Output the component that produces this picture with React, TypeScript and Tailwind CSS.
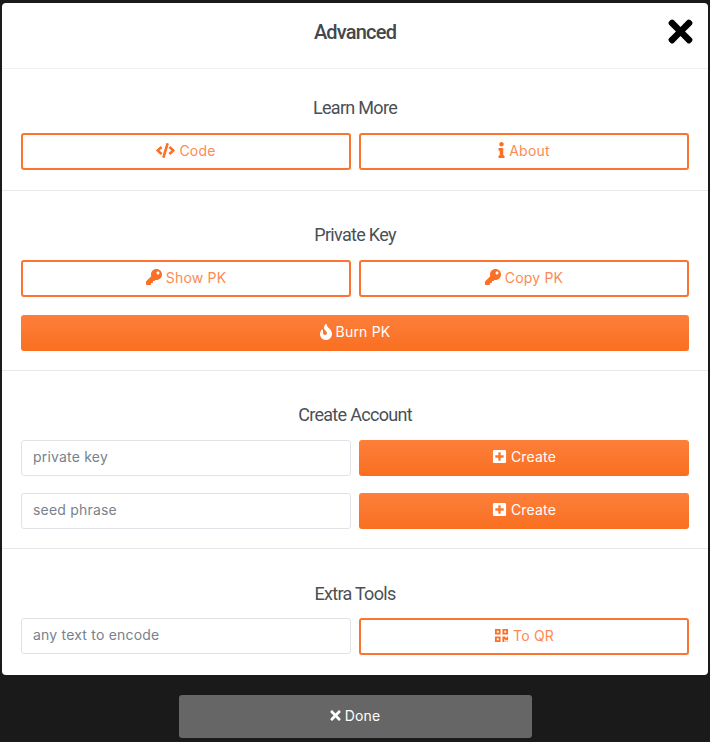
import { FaCode, FaInfo, FaKey, FaFire, FaPlusSquare, FaQrcode, FaTimes } from "react-icons/fa";
import type { ReactNode } from "react";

const font = "font-['Inter','Noto_Sans',sans-serif]";

function Outline({ icon, label }: { icon: ReactNode; label: string }) {
  return (
    <button className="h-[37px] min-w-0 rounded-[3px] border-2 border-[#fb7530] bg-white text-[#fd8a55] flex items-center justify-center gap-[4px] pb-[3px] text-[14px] tracking-[0.2px]">
      <span className="text-[#fb6f26]">{icon}</span>
      {label}
    </button>
  );
}

function Solid({ icon, label }: { icon: ReactNode; label: string }) {
  return (
    <button className="h-[36px] min-w-0 rounded-[3px] bg-gradient-to-b from-[#fd7f3a] to-[#f96f1f] text-white flex items-center justify-center gap-[4px] pb-[3px] text-[14px] tracking-[0.2px]">
      {icon}
      {label}
    </button>
  );
}

function Field({ placeholder }: { placeholder: string }) {
  return (
    <div className="h-[36px] min-w-0 rounded-[3px] border border-[#dfe3e8] bg-white pl-[11px] pb-[3px] flex items-center text-[14px] text-[#78828c] tracking-[0.2px]">
      {placeholder}
    </div>
  );
}

function Heading({ children }: { children: ReactNode }) {
  return <div className="h-[24px] flex items-center justify-center font-['Roboto',sans-serif] text-[18px] leading-none text-[#4a4f55] tracking-[-0.7px]">{children}</div>;
}

export default function App() {
  return (
    <div className={`${font} h-[742px] w-[710px] overflow-hidden bg-[#1a1a1a] pt-[3px]`}>
      <div className="mx-[2px] h-[672px] rounded-[4px] bg-white">
        <div className="relative flex h-[66px] items-center justify-center border-b border-[#eef0f2] pb-[7px]">
          <span className="font-['Roboto',sans-serif] text-[20px] font-medium tracking-[-0.8px] text-[#43474c]">Advanced</span>
          <FaTimes className="absolute right-[10px] top-[11px] text-[35px] text-black" />
        </div>
        <div className="h-[122px] border-b border-[#e6e8ea] px-[19px] pt-[27px]">
          <Heading>Learn More</Heading>
          <div className="mt-[13px] grid grid-cols-2 gap-[8px]">
            <Outline icon={<FaCode className="text-[19px]" />} label="Code" />
            <Outline icon={<FaInfo className="h-[16px] w-[7px]" />} label="About" />
          </div>
        </div>
        <div className="h-[180px] border-b border-[#e6e8ea] px-[19px] pt-[32px]">
          <Heading>Private Key</Heading>
          <div className="mt-[13px] grid grid-cols-2 gap-[8px]">
            <Outline icon={<FaKey className="text-[16px]" />} label="Show PK" />
            <Outline icon={<FaKey className="text-[16px]" />} label="Copy PK" />
          </div>
          <div className="mt-[18px] grid">
            <Solid icon={<FaFire className="h-[16px] w-[12px]" />} label="Burn PK" />
          </div>
        </div>
        <div className="h-[178px] border-b border-[#e6e8ea] px-[19px] pt-[32px]">
          <Heading>Create Account</Heading>
          <div className="mt-[13px] grid grid-cols-2 gap-[8px]">
            <Field placeholder="private key" />
            <Solid icon={<FaPlusSquare className="text-[15px]" />} label="Create" />
          </div>
          <div className="mt-[17px] grid grid-cols-2 gap-[8px]">
            <Field placeholder="seed phrase" />
            <Solid icon={<FaPlusSquare className="text-[15px]" />} label="Create" />
          </div>
        </div>
        <div className="px-[19px] pt-[33px]">
          <Heading>Extra Tools</Heading>
          <div className="mt-[12px] grid grid-cols-2 gap-[8px]">
            <Field placeholder="any text to encode" />
            <Outline icon={<FaQrcode className="text-[15px]" />} label="To QR" />
          </div>
        </div>
      </div>
      <div className="mt-[20px] flex justify-center">
        <button className="flex h-[43px] w-[353px] items-center justify-center gap-[4px] rounded-[3px] bg-[#666666] pb-[3px] text-[14px] tracking-[0.2px] text-white">
          <FaTimes className="h-[15px] w-[11px]" />
          Done
        </button>
      </div>
    </div>
  );
}
